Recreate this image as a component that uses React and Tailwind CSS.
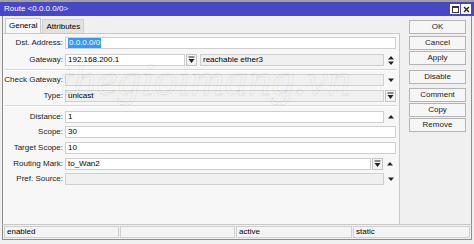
import React from 'react'

const font = "font-['Liberation_Sans',Arial,sans-serif]"

function Down() {
    return (
        <svg width="8" height="6" viewBox="0 0 8 6" className="shrink-0">
            <path d="M1 1.5h6L4 5z" fill="#222" />
        </svg>
    )
}

function Up() {
    return (
        <svg width="8" height="6" viewBox="0 0 8 6" className="shrink-0">
            <path d="M1 4.5h6L4 1z" fill="#222" />
        </svg>
    )
}

function UpDown() {
    return (
        <svg width="8" height="11" viewBox="0 0 8 11" className="shrink-0">
            <path d="M1 4.5h6L4 1z M1 6.5h6L4 10z" fill="#222" />
        </svg>
    )
}

// boxed dropdown button: bar over a down triangle
function BoxDrop({ className = '' }) {
    return (
        <div className={`h-[12px] w-[11px] border border-[#c4c4c4] bg-[#f4f4f4] flex items-center justify-center shrink-0 ${className}`}>
            <svg width="7" height="8" viewBox="0 0 7 8">
                <path d="M0.5 1h6" stroke="#222" strokeWidth="1" />
                <path d="M0.5 3h6L3.5 7z" fill="#222" />
            </svg>
        </div>
    )
}

function Field({ value, grey, className = 'w-[319px]', children }) {
    return (
        <div
            className={`h-[12px] border border-[#cfcfcf] flex items-center px-[2px] overflow-hidden whitespace-nowrap ${
                grey ? 'bg-[#f0f0f0]' : 'bg-white'
            } ${className}`}
        >
            {children ?? value}
        </div>
    )
}

function Row({ label, children, className = '' }) {
    return (
        <div className={`flex items-center h-[12px] ${className}`}>
            <div className="w-[62px] text-right pr-[2px] whitespace-nowrap text-[#222]">{label}</div>
            {children}
        </div>
    )
}

function Sep({ className = '' }) {
    return <div className={`mx-[2px] h-[2px] border-t border-[#d6d6d6] border-b border-b-white ${className}`} />
}

function Btn({ children, className = '' }) {
    return (
        <div className={`w-[57px] h-[14px] border border-[#b4b4b4] bg-[#f6f6f6] flex items-center justify-center text-[#222] ${className}`}>
            {children}
        </div>
    )
}

export default function App() {
    return (
        <div className={`${font} text-[8px] leading-none w-[474px] h-[244px] bg-[#f0f0f0] border-t-2 border-[#a2a2a2] overflow-hidden relative`}>
            {/* title bar */}
            <div className="h-[14px] bg-[#4848c6] flex items-center justify-between pl-[4px] pr-[3px]">
                <span className="text-white text-[8px]">Route &lt;0.0.0.0/0&gt;</span>
                <div className="flex gap-[1px]">
                    <div className="w-[10px] h-[10px] bg-white flex items-center justify-center">
                        <div className="w-[7px] h-[7px] border border-[#333] border-t-2" />
                    </div>
                    <div className="w-[10px] h-[10px] bg-white flex items-center justify-center">
                        <svg width="7" height="7" viewBox="0 0 7 7">
                            <path d="M1 1l5 5M6 1l-5 5" stroke="#222" strokeWidth="1.4" />
                        </svg>
                    </div>
                </div>
            </div>

            <div className="flex h-[208px] mx-[2px] border-l border-r border-[#8e8e8e]">
                {/* left: tabs + form */}
                <div className="w-[397px] flex flex-col">
                    <div className="h-[17px] flex items-end pl-[2px] gap-[1px]">
                        <div className="h-[15px] px-[3px] bg-[#f8f8f8] border border-b-0 border-[#c8c8c8] flex items-center">General</div>
                        <div className="h-[14px] px-[3px] bg-[#e2e2e2] border border-b-0 border-[#cfcfcf] flex items-center">Attributes</div>
                    </div>
                    <div className="flex-1 bg-[#f7f7f7] border-t border-r border-[#c8c8c8] pt-[3px] relative">
                        <Row label="Dst. Address:">
                            <Field className="w-[331px]">
                                <span className="bg-[#3399ff] text-white px-[1px] py-[1px]">0.0.0.0/0</span>
                            </Field>
                        </Row>
                        <Row label="Gateway:" className="mt-[5px]">
                            <Field value="192.168.200.1" className="w-[120px]" />
                            <BoxDrop className="ml-[1px]" />
                            <Field value="reachable ether3" grey className="w-[184px] ml-[3px]" />
                            <div className="w-[13px] flex justify-center"><UpDown /></div>
                        </Row>
                        <Sep className="mt-[3px]" />
                        <Row label="Check Gateway:" className="mt-[3px]">
                            <Field grey />
                            <div className="w-[13px] flex justify-center"><Down /></div>
                        </Row>
                        <Row label="Type:" className="mt-[4px]">
                            <Field value="unicast" grey />
                            <BoxDrop className="ml-[1px]" />
                        </Row>
                        <Sep className="mt-[3px]" />
                        <Row label="Distance:" className="mt-[4px]">
                            <Field value="1" />
                            <div className="w-[13px] flex justify-center"><Up /></div>
                        </Row>
                        <Row label="Scope:" className="mt-[3px]">
                            <Field value="30" className="w-[331px]" />
                        </Row>
                        <Row label="Target Scope:" className="mt-[4px]">
                            <Field value="10" className="w-[331px]" />
                        </Row>
                        <Row label="Routing Mark:" className="mt-[4px]">
                            <Field value="to_Wan2" className="w-[306px]" />
                            <BoxDrop className="ml-[1px]" />
                            <div className="w-[13px] flex justify-center"><Up /></div>
                        </Row>
                        <Row label="Pref. Source:" className="mt-[3px]">
                            <Field grey />
                            <div className="w-[13px] flex justify-center"><Down /></div>
                        </Row>
                    </div>
                </div>

                {/* right: buttons */}
                <div className="flex-1 flex flex-col items-center pt-[4px] pl-[4px]">
                    <Btn>OK</Btn>
                    <Btn className="mt-[2px]">Cancel</Btn>
                    <Btn className="mt-[1px]">Apply</Btn>
                    <Btn className="mt-[5px]">Disable</Btn>
                    <Btn className="mt-[4px]">Comment</Btn>
                    <Btn className="mt-[1px]">Copy</Btn>
                    <Btn className="mt-[1px]">Remove</Btn>
                </div>
            </div>

            {/* status bar */}
            <div className="mx-[2px] h-[16px] border border-[#8e8e8e] border-t-[#c8c8c8] flex px-[1px] py-[1px] gap-[1px] bg-[#f0f0f0]">
                <div className="w-[115px] border border-[#d0d0d0] bg-[#f4f4f4] flex items-center px-[2px]">enabled</div>
                <div className="w-[115px] border border-[#d0d0d0] bg-[#f4f4f4]" />
                <div className="w-[116px] border border-[#d0d0d0] bg-[#f4f4f4] flex items-center px-[2px]">active</div>
                <div className="flex-1 border border-[#d0d0d0] bg-[#f4f4f4] flex items-center px-[2px]">static</div>
            </div>

            {/* watermark */}
            <div className="absolute left-[60px] top-[54px] pointer-events-none font-['Liberation_Serif',serif] italic text-[47px] leading-none text-transparent [-webkit-text-stroke:1px_rgba(0,0,0,0.07)]">
                thegioimang.vn
            </div>
        </div>
    )
}
